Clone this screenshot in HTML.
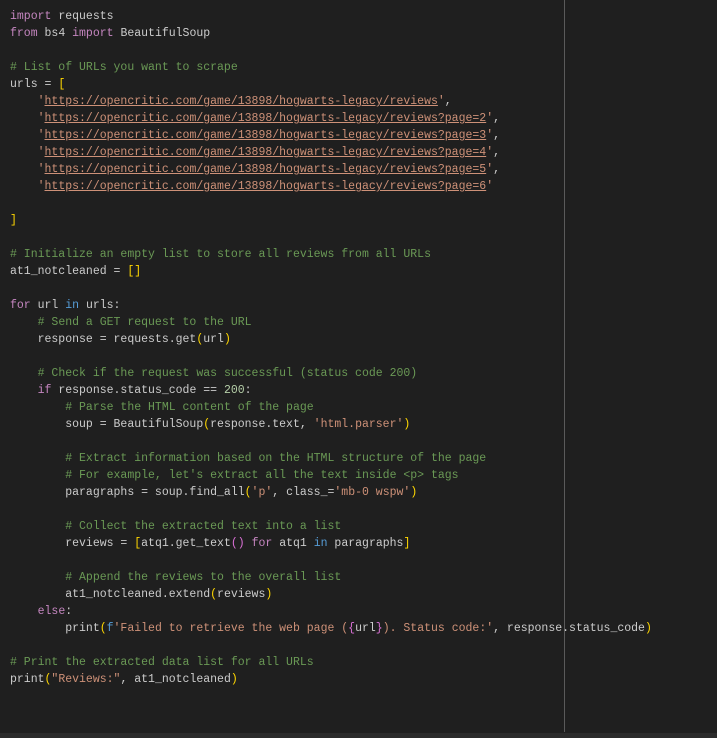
<!DOCTYPE html>
<html><head><meta charset="utf-8"><style>
html,body{margin:0;padding:0;background:#1f1f1f;width:717px;height:738px;overflow:hidden}
pre{margin:0;position:absolute;left:10px;top:8px;font-family:"Liberation Mono",monospace;font-size:11.5px;line-height:17px;color:#cccccc;white-space:pre}
.k{color:#c586c0}.c{color:#6a9955}.s{color:#ce9178}.u{color:#ce9178;text-decoration:underline}
.b1{color:#ffd700}.b2{color:#da70d6}.bl{color:#569cd6}.n{color:#b5cea8}
#vl{position:absolute;left:564px;top:0;width:1px;height:732px;background:#5a5a5a}
#bb{position:absolute;left:0;top:733px;width:717px;height:5px;background:#2b2b2b}
</style></head><body>
<div id="vl"></div><div id="bb"></div>
<pre><span class="k">import</span> requests
<span class="k">from</span> bs4 <span class="k">import</span> BeautifulSoup

<span class="c"># List of URLs you want to scrape</span>
urls = <span class="b1">[</span>
    <span class="s">'</span><span class="u">https://opencritic.com/game/13898/hogwarts-legacy/reviews</span><span class="s">'</span>,
    <span class="s">'</span><span class="u">https://opencritic.com/game/13898/hogwarts-legacy/reviews?page=2</span><span class="s">'</span>,
    <span class="s">'</span><span class="u">https://opencritic.com/game/13898/hogwarts-legacy/reviews?page=3</span><span class="s">'</span>,
    <span class="s">'</span><span class="u">https://opencritic.com/game/13898/hogwarts-legacy/reviews?page=4</span><span class="s">'</span>,
    <span class="s">'</span><span class="u">https://opencritic.com/game/13898/hogwarts-legacy/reviews?page=5</span><span class="s">'</span>,
    <span class="s">'</span><span class="u">https://opencritic.com/game/13898/hogwarts-legacy/reviews?page=6</span><span class="s">'</span>

<span class="b1">]</span>

<span class="c"># Initialize an empty list to store all reviews from all URLs</span>
at1_notcleaned = <span class="b1">[]</span>

<span class="k">for</span> url <span class="bl">in</span> urls:
    <span class="c"># Send a GET request to the URL</span>
    response = requests.get<span class="b1">(</span>url<span class="b1">)</span>

    <span class="c"># Check if the request was successful (status code 200)</span>
    <span class="k">if</span> response.status_code == <span class="n">200</span>:
        <span class="c"># Parse the HTML content of the page</span>
        soup = BeautifulSoup<span class="b1">(</span>response.text, <span class="s">'html.parser'</span><span class="b1">)</span>

        <span class="c"># Extract information based on the HTML structure of the page</span>
        <span class="c"># For example, let's extract all the text inside &lt;p&gt; tags</span>
        paragraphs = soup.find_all<span class="b1">(</span><span class="s">'p'</span>, class_=<span class="s">'mb-0 wspw'</span><span class="b1">)</span>

        <span class="c"># Collect the extracted text into a list</span>
        reviews = <span class="b1">[</span>atq1.get_text<span class="b2">()</span> <span class="k">for</span> atq1 <span class="bl">in</span> paragraphs<span class="b1">]</span>

        <span class="c"># Append the reviews to the overall list</span>
        at1_notcleaned.extend<span class="b1">(</span>reviews<span class="b1">)</span>
    <span class="k">else</span>:
        print<span class="b1">(</span><span class="bl">f</span><span class="s">'Failed to retrieve the web page (</span><span class="b2">{</span>url<span class="b2">}</span><span class="s">). Status code:'</span>, response.status_code<span class="b1">)</span>

<span class="c"># Print the extracted data list for all URLs</span>
print<span class="b1">(</span><span class="s">"Reviews:"</span>, at1_notcleaned<span class="b1">)</span>
</pre>
</body></html>
